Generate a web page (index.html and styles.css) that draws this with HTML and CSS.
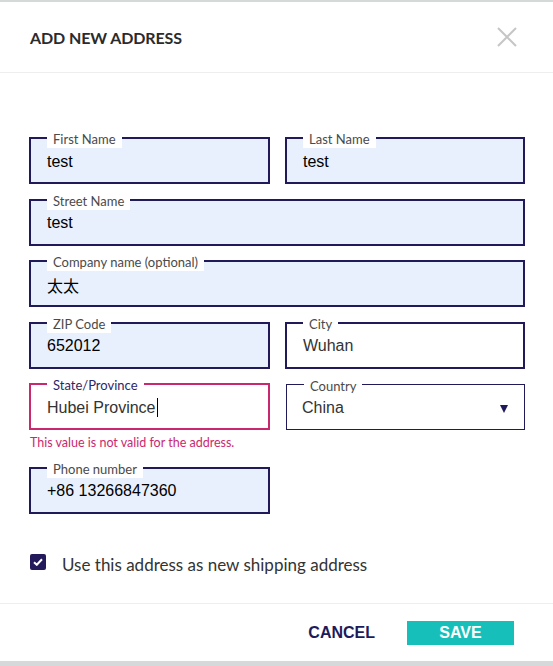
FILE: index.html
```html
<!DOCTYPE html>
<html lang="en">
<head>
<meta charset="utf-8">
<title>Add new address</title>
<link rel="stylesheet" href="styles.css">
</head>
<body>
<div class="modal">
  <header class="modal-header">
    <h2 class="modal-title">ADD NEW ADDRESS</h2>
    <button class="close" aria-label="Close">
      <svg width="20" height="20" viewBox="0 0 20 20"><path d="M1 1L19 19M19 1L1 19" stroke="#c6c6c6" stroke-width="2" fill="none"/></svg>
    </button>
  </header>
  <div class="modal-body">
    <div class="grid">
      <div class="field filled"><span class="label">First Name</span><span class="value">test</span></div>
      <div class="field filled"><span class="label">Last Name</span><span class="value">test</span></div>
      <div class="field filled wide"><span class="label">Street Name</span><span class="value">test</span></div>
      <div class="field filled wide"><span class="label">Company name (optional)</span><span class="value">太太</span></div>
      <div class="field filled"><span class="label">ZIP Code</span><span class="value">652012</span></div>
      <div class="field"><span class="label">City</span><span class="value">Wuhan</span></div>
      <div class="cell">
        <div class="field error"><span class="label">State/Province</span><span class="value">Hubei Province<span class="caret"></span></span></div>
        <div class="error-msg">This value is not valid for the address.</div>
      </div>
      <div class="cell">
        <div class="field select"><span class="label">Country</span><span class="value">China</span><span class="arrow"></span></div>
      </div>
      <div class="field filled"><span class="label">Phone number</span><span class="value">+86 13266847360</span></div>
    </div>
    <label class="check-row">
      <span class="checkbox"><svg width="10" height="8" viewBox="0 0 10 8"><path d="M1 4.2L3.8 6.8L9 1.2" stroke="#fff" stroke-width="2" fill="none"/></svg></span>
      <span class="check-text">Use this address as new shipping address</span>
    </label>
  </div>
  <footer class="modal-footer">
    <button class="btn-cancel">CANCEL</button>
    <button class="btn-save">SAVE</button>
  </footer>
</div>
</body>
</html>
```

FILE: styles.css
```css
html, body {
  margin: 0;
  padding: 0;
  background: #d5d9d9;
}
body {
  width: 553px;
  height: 666px;
  padding-top: 2px;
  box-sizing: border-box;
  font-family: Lato, "Noto Sans", sans-serif;
}
.modal {
  background: #fff;
  height: 659px;
  display: flex;
  flex-direction: column;
}
.modal-header {
  height: 71px;
  border-bottom: 1px solid #eeeeee;
  display: flex;
  align-items: center;
  justify-content: space-between;
  padding: 0 36px 0 30px;
  box-sizing: border-box;
}
.modal-title {
  margin: 0;
  font-size: 16px;
  font-weight: 700;
  color: #2b2b2b;
  letter-spacing: -0.1px;
}
.close {
  border: 0;
  background: none;
  padding: 0;
  width: 20px;
  height: 20px;
  display: flex;
}
.modal-body {
  flex: 1;
  padding: 64px 28px 0 29px;
}
.grid {
  display: grid;
  grid-template-columns: 241px 240px;
  column-gap: 15px;
  row-gap: 14.5px;
  align-items: start;
}
.wide {
  grid-column: 1 / span 2;
}
.field {
  position: relative;
  height: 47px;
  box-sizing: border-box;
  border: 2px solid #211a5a;
  background: #fff;
  display: flex;
  align-items: center;
  padding: 0 16px;
}
.field.filled {
  background: #e8f0fe;
}
.field.error {
  border-color: #c9286f;
}
.field.select {
  border-width: 1px;
  margin: 1px 0 0 1px;
  height: 46px;
  padding: 0 16px 0 16px;
  justify-content: space-between;
}
.label {
  position: absolute;
  left: 16px;
  top: -8px;
  background: #fff;
  padding: 0 6px;
  font-size: 13px;
  line-height: 17px;
  color: #4a4a4a;
  white-space: nowrap;
}
.field.error .label {
  color: #2e2766;
}
.field.select .label {
  left: 17px;
  top: -7px;
}
.value {
  font-family: "Liberation Sans", Arial, "Noto Sans CJK SC", sans-serif;
  font-size: 16px;
  color: #000;
  padding-top: 2px;
  display: flex;
  align-items: center;
}
.field:not(.filled) .value {
  color: #333;
}
.field.select .value {
  margin-left: -1px;
}
.caret {
  display: inline-block;
  width: 1px;
  height: 19px;
  background: #000;
  margin-left: 1px;
}
.arrow {
  width: 0;
  height: 0;
  border-left: 4.5px solid transparent;
  border-right: 4.5px solid transparent;
  border-top: 8px solid #211a5a;
  margin-top: 3px;
}
.error-msg {
  font-size: 12.5px;
  color: #c9286f;
  line-height: 16px;
  margin-top: 5px;
  margin-left: 1px;
  height: 17px;
}
.check-row {
  display: flex;
  align-items: flex-start;
  margin-top: 40px;
  margin-left: 1px;
}
.checkbox {
  flex: none;
  width: 16px;
  height: 16px;
  border-radius: 2px;
  background: #221a5a;
  display: flex;
  align-items: center;
  justify-content: center;
}
.check-text {
  margin-left: 16px;
  font-size: 17px;
  line-height: 22px;
  color: #333;
  margin-top: 0;
}
.modal-footer {
  height: 58px;
  border-top: 1px solid #eeeeee;
  display: flex;
  align-items: center;
  justify-content: flex-end;
  padding-right: 39px;
  box-sizing: border-box;
}
.btn-cancel, .btn-save {
  font-family: "Liberation Sans", Arial, sans-serif;
  font-weight: 700;
  font-size: 16px;
  border: 0;
  padding: 0;
}
.btn-cancel {
  background: none;
  color: #211a5a;
  margin-right: 32px;
}
.btn-save {
  background: #16bfba;
  color: #fff;
  width: 107px;
  height: 24px;
}
```
